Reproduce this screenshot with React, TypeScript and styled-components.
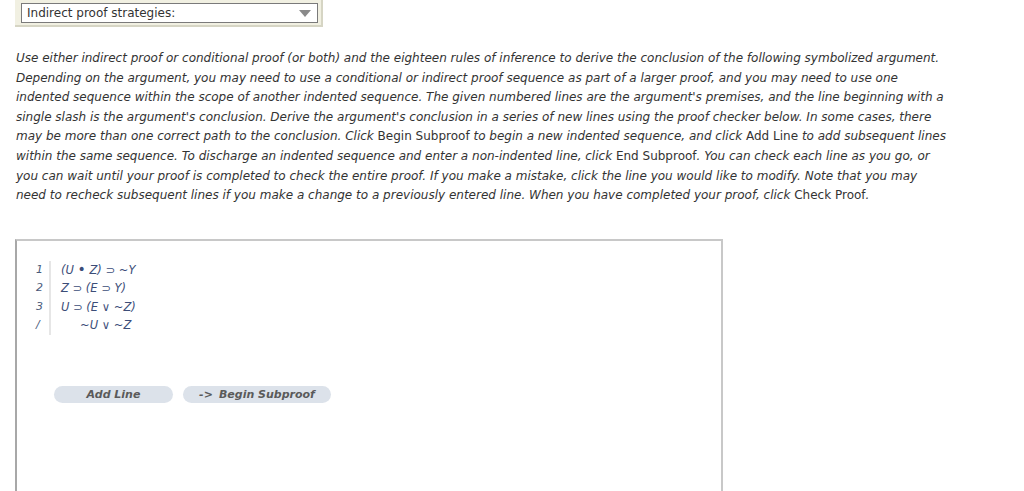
import React from "react";
import styled, { createGlobalStyle } from "styled-components";

const Global = createGlobalStyle`
  html, body { margin: 0; padding: 0; background: #fff; }
  body { font-family: "DejaVu Sans", Verdana, sans-serif; overflow: hidden; }
`;

const Page = styled.div`
  width: 1024px;
  height: 491px;
  overflow: hidden;
  display: flex;
  flex-direction: column;
`;

const SelectBar = styled.div`
  margin-left: 15px;
  width: 308px;
  height: 27px;
  background: #f1f0e2;
  border-right: 2px solid #d6d5c4;
  border-bottom: 2px solid #d6d5c4;
  display: flex;
  align-items: flex-start;
  padding: 3px 0 0 6px;
  box-sizing: border-box;
`;

const SelectBox = styled.div`
  width: 297px;
  height: 20px;
  box-sizing: border-box;
  border: 1px solid #7a7a7a;
  background: #fff;
  display: flex;
  align-items: center;
  justify-content: space-between;
  padding: 0 6px 0 5px;
  font-size: 12px;
  color: #333;
`;

const Arrow = styled.span`
  width: 0;
  height: 0;
  border-left: 6px solid transparent;
  border-right: 6px solid transparent;
  border-top: 7px solid #8a8a8a;
`;

const Instructions = styled.p`
  margin: 22px 0 0 16px;
  width: 930px;
  font-size: 12px;
  line-height: 19.6px;
  font-style: italic;
  color: #333;
`;

const Plain = styled.span`
  font-style: normal;
`;

const ProofBox = styled.div`
  margin: 33px 0 0 15px;
  width: 708px;
  flex: 1;
  box-sizing: border-box;
  border-top: 2px solid #c8c8c8;
  border-left: 2px solid #a8a8a8;
  border-right: 2px solid #c8c8c8;
  padding: 20px 0 0 17px;
`;

const Lines = styled.div`
  display: grid;
  grid-template-columns: 17px auto;
  width: max-content;
`;

const Num = styled.div`
  font-size: 11px;
  font-style: italic;
  color: #4a5a7a;
  line-height: 18.5px;
  border-right: 2px solid #e6e6e6;
  padding-left: 2px;
`;

const Formula = styled.div<{ $indent?: boolean }>`
  font-size: 11.5px;
  font-style: italic;
  color: #3c4d78;
  line-height: 18.5px;
  padding-left: ${(p) => (p.$indent ? "29px" : "10px")};
  white-space: pre;
`;

const Dot = styled.span`
  font-style: normal;
  font-size: 14px;
  line-height: 0;
`;

const Buttons = styled.div`
  display: flex;
  gap: 10px;
  margin: 51px 0 0 20px;
`;

const Pill = styled.button<{ $w: number }>`
  width: ${(p) => p.$w}px;
  height: 17px;
  border: none;
  border-radius: 9px;
  background: #dce2ea;
  font-family: "DejaVu Sans", Verdana, sans-serif;
  font-size: 11px;
  font-weight: bold;
  font-style: italic;
  color: #5a5a5a;
  padding: 0;
  display: flex;
  align-items: center;
  justify-content: center;
  gap: 6px;
`;

const lines: { n: string; f: React.ReactNode; indent?: boolean }[] = [
  { n: "1", f: <>(U <Dot>{"\u2022"}</Dot> Z) {"\u2283"} ~Y</> },
  { n: "2", f: "Z \u2283 (E \u2283 Y)" },
  { n: "3", f: "U \u2283 (E \u2228 ~Z)" },
  { n: "/", f: "~U \u2228 ~Z", indent: true },
];

export default function App() {
  return (
    <Page>
      <Global />
      <SelectBar>
        <SelectBox>
          <span>Indirect proof strategies:</span>
          <Arrow />
        </SelectBox>
      </SelectBar>
      <Instructions>
        Use either indirect proof or conditional proof (or both) and the eighteen rules of inference to derive the
        conclusion of the following symbolized argument. Depending on the argument, you may need to use a conditional
        or indirect proof sequence as part of a larger proof, and you may need to use one indented sequence within the
        scope of another indented sequence. The given numbered lines are the argument's premises, and the line
        beginning with a single slash is the argument's conclusion. Derive the argument's conclusion in a series of new
        lines using the proof checker below. In some cases, there may be more than one correct path to the conclusion.
        Click <Plain>Begin Subproof</Plain> to begin a new indented sequence, and click <Plain>Add Line</Plain> to add
        subsequent lines within the same sequence. To discharge an indented sequence and enter a non-indented line,
        click <Plain>End Subproof</Plain>. You can check each line as you go, or you can wait until your proof is
        completed to check the entire proof. If you make a mistake, click the line you would like to modify. Note that
        you may need to recheck subsequent lines if you make a change to a previously entered line. When you have
        completed your proof, click <Plain>Check Proof</Plain>.
      </Instructions>
      <ProofBox>
        <Lines>
          {lines.map((l) => (
            <React.Fragment key={l.n}>
              <Num>{l.n}</Num>
              <Formula $indent={l.indent}>{l.f}</Formula>
            </React.Fragment>
          ))}
        </Lines>
        <Buttons>
          <Pill $w={119}>Add Line</Pill>
          <Pill $w={148}>
            <span>-&gt;</span>
            <span>Begin Subproof</span>
          </Pill>
        </Buttons>
      </ProofBox>
    </Page>
  );
}
